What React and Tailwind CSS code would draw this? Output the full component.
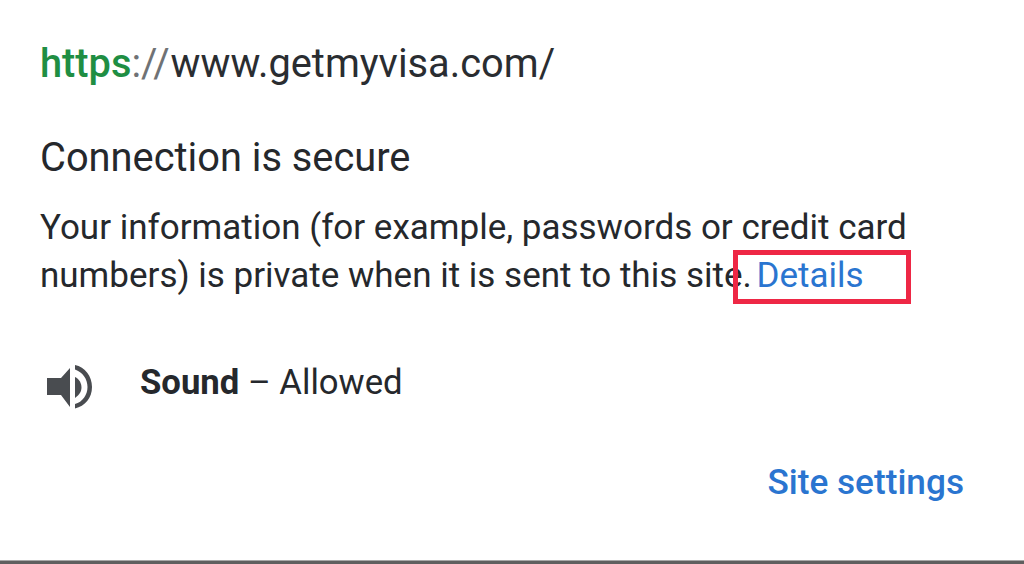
import React from "react";

const SoundIcon = () => (
  <svg width="48" height="48" viewBox="0 0 48 48" className="shrink-0 mt-[5px]">
    <path d="M1 15h14l9-10v39l-9-12H1z" fill="#494c50" />
    <path d="M29 14c4 2 6.500 6 6.500 10.500S33 32 29 35z" fill="#494c50" />
    <path d="M29 2c10 2 17 11 17 22S39 43 29 45.500V41c7.500-2 12.500-9 12.500-17S36.500 9 29 6.500z" fill="#494c50" />
  </svg>
);

const App = () => {
  return (
    <div className="relative flex flex-col w-[1024px] h-[564px] overflow-hidden bg-white font-['Roboto',sans-serif] text-[#25282c]">
      <div className="flex-1 px-[40px] pt-[40px]">
        <div className="text-[39.8px] leading-[48px] text-[#2a2d31]">
          <span className="font-medium text-[#1f8e43]">https</span>
          <span className="text-[#6f7275] pr-[1px]">://</span>
          www.getmyvisa.com/
        </div>
        <div className="mt-[46px] text-[39.8px] leading-[48px]">Connection is secure</div>
        <p className="mt-[22px] w-[900px] text-[35px] leading-[48px]">
          Your information (for example, passwords or credit card numbers) is private when it is sent to this site.{" "}
          <span className="text-[#2a75d0] -ml-[4px]">Details</span>
        </p>
        <div className="flex items-start mt-[58px] ml-[6px]">
          <SoundIcon />
          <div className="ml-[46px] text-[34.7px] leading-[48px]">
            <span className="font-bold">Sound</span> – Allowed
          </div>
        </div>
        <div className="flex justify-end mt-[47px] mr-[20px]">
          <span className="text-[35.2px] leading-[48px] font-medium text-[#2a75d0]">Site settings</span>
        </div>
      </div>
      <div className="h-[4px] bg-[#5f5f5f] border-t border-[#a8a8a8]" />
      <div className="absolute left-[733px] top-[250px] w-[178px] h-[54px] border-[5px] border-[#ee2745]" />
    </div>
  );
};

export default App;
